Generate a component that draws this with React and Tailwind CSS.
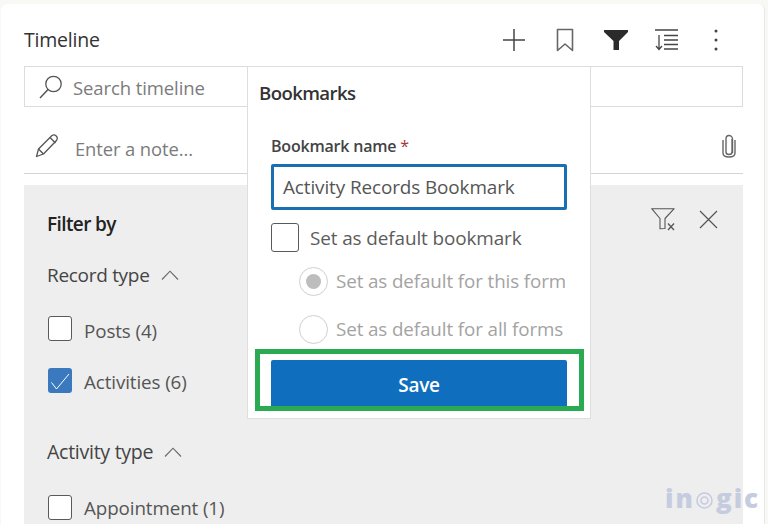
const font = { fontFamily: '"Open Sans", "Noto Sans", sans-serif' };

function Box({ className = "" }) {
  return <span className={"block shrink-0 rounded-[3px] border border-[#5a5a5a] bg-white " + className} />;
}

function Chevron() {
  return (
    <svg width="18" height="10" viewBox="0 0 18 10" fill="none" stroke="#666" strokeWidth="1.1">
      <path d="M1 9.5 9 1.2 17 9.5" />
    </svg>
  );
}

function Header() {
  return (
    <div className="flex h-[62px] items-center justify-between pt-[10px]">
      <span className="text-[19.5px] tracking-[-0.2px] text-[#333]">Timeline</span>
      <div className="mr-[24px] flex h-[24px] items-center">
        <svg width="24" height="24" viewBox="0 0 24 24" fill="none" stroke="#444" strokeWidth="1.5">
          <path d="M12 1v22M1 12h22" />
        </svg>
        <svg className="ml-[30px]" width="18" height="24" viewBox="0 0 18 24" fill="none" stroke="#666" strokeWidth="1.6">
          <path d="M1.5 1.5h15v21L9 16l-7.5 6.5z" strokeLinejoin="round" />
        </svg>
        <svg className="ml-[30px]" width="24" height="22" viewBox="0 0 24 22" fill="#2b2b2b">
          <path d="M0 1h24v2l-9 9v9H9.5v-9L0 3z" />
        </svg>
        <svg className="ml-[27px]" width="24" height="22" viewBox="0 0 24 22" fill="none" stroke="#444" strokeWidth="1.3">
          <path d="M0 1h23M9 6.5h14M9 11h14M9 15.500h14M9 20h14M4 6v14M1 17l3 3.500L7 17" />
        </svg>
        <svg className="ml-[34px]" width="6" height="24" viewBox="0 0 6 24" fill="#444">
          <circle cx="3" cy="3" r="1.5" />
          <circle cx="3" cy="12" r="1.5" />
          <circle cx="3" cy="21" r="1.5" />
        </svg>
      </div>
    </div>
  );
}

function SearchBox() {
  return (
    <div className="flex h-[41px] items-center border border-[#dcdcdc] pl-[14px]">
      <svg width="24" height="24" viewBox="0 0 24 24" fill="none" stroke="#555" strokeWidth="1.3">
        <circle cx="14.5" cy="9" r="7.7" />
        <path d="M9 14.5 1 23" strokeWidth="1.5" />
      </svg>
      <span className="ml-[10px] pt-[3px] text-[18.5px] tracking-[-0.1px] text-[#7b7b7b]">Search timeline</span>
    </div>
  );
}

function NoteRow() {
  return (
    <div className="flex h-[67px] items-center justify-between border-b border-[#d4d4d4] pl-[11px] pr-[7px] pt-[12px]">
      <div className="flex items-center">
        <svg width="24" height="24" viewBox="0 0 24 24" fill="none" stroke="#555" strokeWidth="1.3">
          <path d="M1.5 22.5 3.5 15 17 1.5c1.5-.9 3-.6 4.200.5 1.200 1.200 1.400 2.700.5 4.200L8.500 20z" strokeLinejoin="round" />
          <path d="M3.500 15 8.500 20M15 3.500l5.500 5.500" />
        </svg>
        <span className="ml-[16px] pt-[6px] text-[18.4px] tracking-[-0.1px] text-[#7b7b7b]">Enter a note...</span>
      </div>
      <svg width="14" height="24" viewBox="0 0 14 24" fill="none" stroke="#666" strokeWidth="1.4">
        <path d="M10 5v13c0 1.500-1.300 2.500-3 2.500S4 19.500 4 18V5c0-2 1.300-3.500 3-3.500S10.500 3 10.500 5v14" />
        <path d="M1 6v13c0 2.500 2.500 4 6 4s6-1.500 6-4V6" />
      </svg>
    </div>
  );
}

function FilterPanel() {
  return (
    <div className="relative mt-[11px] h-[339px] overflow-hidden bg-[#eeeeee] pl-[23px] pt-[26px]">
      <div className="absolute right-[25px] top-[23px] flex items-center gap-[23px]">
        <svg width="25" height="23" viewBox="0 0 25 23" fill="none" stroke="#555" strokeWidth="1.100">
          <path d="M.7.7h22.500L14 10.500V20.500l-5 .2V10.500z" strokeLinejoin="round" />
          <path d="M17 15.500l6 6.500M23 15.500l-6 6.500" strokeWidth="1.300" />
        </svg>
        <svg width="19" height="19" viewBox="0 0 19 19" fill="none" stroke="#555" strokeWidth="1.200">
          <path d="M1 1l17 17M18 1 1 18" />
        </svg>
      </div>
      <div className="text-[19px] font-semibold leading-[26px] tracking-[-0.6px] text-[#222]">Filter by</div>
      <div className="mt-[25px] flex h-[26px] items-center gap-[11px] text-[19px] tracking-[-0.3px] text-[#444]">
        Record type <Chevron />
      </div>
      <div className="ml-[1px] mt-[28px] flex h-[25px] items-center gap-[12px] text-[18.8px] tracking-[-0.1px] text-[#555]">
        <Box className="h-[25px] w-[24px]" />
        <span className="pt-[5px]">Posts (4)</span>
      </div>
      <div className="ml-[1px] mt-[27px] flex h-[25px] items-center gap-[12px] text-[18.8px] tracking-[-0.1px] text-[#555]">
        <span className="flex h-[25px] w-[24px] shrink-0 items-center justify-center rounded-[3px] bg-[#3b79bf]">
          <svg width="20" height="20" viewBox="0 0 20 20" fill="none" stroke="#fff" strokeWidth="1">
            <path d="M1.500 11.500 6.500 18 19 3" />
          </svg>
        </span>
        <span className="pt-[4px]">Activities (6)</span>
      </div>
      <div className="mt-[46px] flex h-[26px] items-center gap-[11px] text-[19.6px] tracking-[-0.3px] text-[#444]">
        Activity type <Chevron />
      </div>
      <div className="ml-[1px] mt-[30px] flex h-[25px] items-center gap-[12px] text-[18.8px] tracking-[-0.1px] text-[#555]">
        <Box className="h-[25px] w-[24px]" />
        <span className="pt-[2px]">Appointment (1)</span>
      </div>
    </div>
  );
}

function Radio({ on, children }) {
  return (
    <div className="ml-[28px] flex h-[29px] items-center gap-[8px] whitespace-nowrap text-[18.8px] tracking-[-0.1px] text-[#a3a3a3]">
      <span className="flex h-[29px] w-[29px] shrink-0 items-center justify-center rounded-full border border-[#cfcfcf] bg-white">
        {on && <span className="block h-[15px] w-[15px] rounded-full bg-[#bdbdbd]" />}
      </span>
      {children}
    </div>
  );
}

function BookmarkPopup() {
  return (
    <div className="absolute left-[247px] top-[66px] h-[353px] w-[344px] border border-[#dedede] bg-white">
      <div className="pl-[11px] pt-[13px] text-[18.6px] font-semibold leading-[26px] tracking-[-0.6px] text-[#333]">Bookmarks</div>
      <div className="px-[23px]">
        <div className="mt-[30px] h-[20px] text-[16px] font-semibold leading-[20px] tracking-[-0.2px] text-[#444]">
          Bookmark name <span className="font-normal text-[#a4373a]">*</span>
        </div>
        <div className="mt-[8px] flex h-[46px] w-[296px] items-center rounded-[2px] border-[3px] border-[#1a6fb0] pl-[9px] text-[18.9px] tracking-[-0.1px] text-[#555]">
          Activity Records Bookmark
        </div>
        <div className="mt-[13px] flex h-[29px] items-center gap-[11px] text-[18.9px] tracking-[-0.1px] text-[#5c5c5c]">
          <Box className="h-[29px] w-[28px]" />
          <span className="pt-[1px]">Set as default bookmark</span>
        </div>
        <div className="mt-[15px]">
          <Radio on>Set as default for this form</Radio>
        </div>
        <div className="mt-[19px]">
          <Radio>Set as default for all forms</Radio>
        </div>
        <div className="mt-[16px] flex h-[48px] w-[296px] items-center justify-center rounded-[2px] bg-[#106ebe] pt-[2px] text-[19px] font-semibold tracking-[-0.3px] text-white">
          Save
        </div>
      </div>
      <div className="absolute left-[7px] top-[282px] h-[62px] w-[329px] border-[5px] border-[#2aab52]" />
    </div>
  );
}

export default function App() {
  return (
    <div style={font} className="h-[524px] w-[768px] overflow-hidden bg-[#f8f8f4] pl-[1px] pt-[4px]">
      <div className="relative h-[520px] w-[764px] overflow-hidden rounded-tr-[6px] rounded-tl-[6px] border-r border-[#e8e8e8] bg-white pl-[23px] pr-[21px]">
        <Header />
        <SearchBox />
        <NoteRow />
        <FilterPanel />
        <div className="absolute -top-[4px] -left-[1px]">
          <BookmarkPopup />
        </div>
        <div className="absolute left-[664px] top-[478px] flex items-center text-[26px] font-extrabold leading-[32px] tracking-[2px] text-[#c6cce0]">
          <span>in</span>
          <svg className="ml-[1px] mr-[3px] mt-[4px]" width="17" height="17" viewBox="0 0 17 17" fill="none" stroke="#c6cce0" strokeWidth="1.6">
            <circle cx="8.5" cy="8.5" r="7.5" />
            <circle cx="8.5" cy="8.5" r="3.5" />
          </svg>
          <span>gic</span>
        </div>
      </div>
    </div>
  );
}
